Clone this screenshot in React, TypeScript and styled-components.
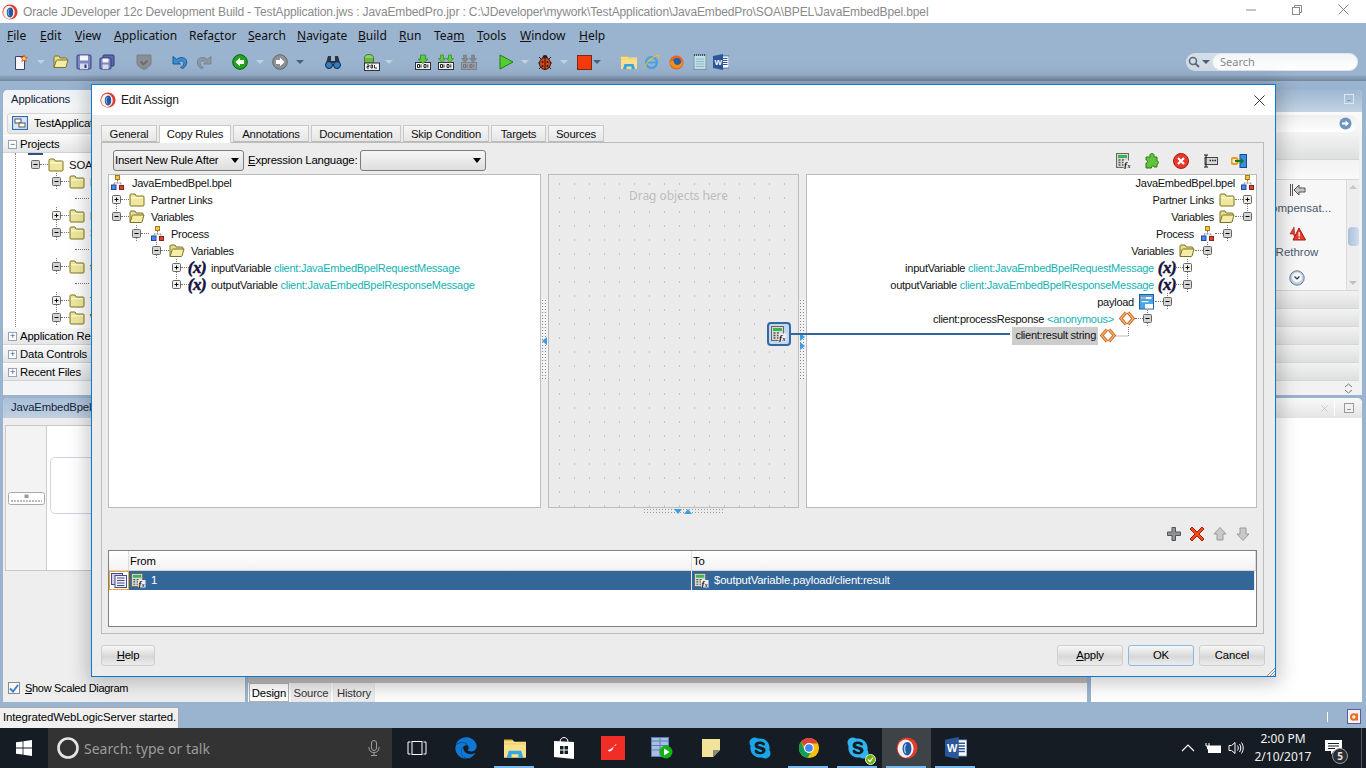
import React from "react";
import styled, { createGlobalStyle } from "styled-components";
import { FaEdge, FaSkype } from "react-icons/fa";

const UI = `"Liberation Sans", "Noto Sans", sans-serif`;
const NOTO = `"Noto Sans", "Liberation Sans", sans-serif`;
const BLUE = "#9ab3cf";

const Global = createGlobalStyle`
  html, body { margin: 0; padding: 0; width: 1366px; height: 768px; overflow: hidden; background: ${BLUE}; }
  * { box-sizing: border-box; }
  #root { width: 1366px; height: 768px; }
`;

const Page = styled.div`
  position: relative; width: 1366px; height: 768px; display: flex; flex-direction: column;
  overflow: hidden; background: ${BLUE}; font-family: ${UI}; font-size: 11.3px; letter-spacing: -0.15px; color: #000;
`;

/* ---------- window chrome ---------- */
const TitleBar = styled.div`
  height: 23px; flex: none; background: #fff; display: flex; align-items: center; padding-left: 2px; gap: 5px;
`;
const TitleText = styled.div`
  font-size: 12px; letter-spacing: -0.13px; color: #8a8a8a; white-space: nowrap; flex: 1;
`;
const WinButtons = styled.div`
  display: flex; align-items: center; height: 23px; padding-bottom: 4px;
`;
const WinBtn = styled.div<{ $w: number }>`
  width: ${p => p.$w}px; display: flex; justify-content: center;
`;
const MenuBar = styled.div`
  height: 24px; flex: none; background: ${BLUE}; display: flex; align-items: center; padding-left: 7px; font-size: 12px; letter-spacing: 0; font-family: ${NOTO};
`;
const MenuItem = styled.div<{ $w: number }>`
  width: ${p => p.$w}px; white-space: nowrap; color: #101010;
`;
const ToolBar = styled.div`
  height: 34px; flex: none; display: flex; align-items: center; padding: 0 8px 4px 14px;
  background: linear-gradient(#9ab3cf 0 28px, #8fa6c0 29px, #73879e 34px);
`;
const ToolSlot = styled.div<{ $ml: number; $w?: number }>`
  margin-left: ${p => p.$ml}px; width: ${p => p.$w ?? 16}px; height: 18px; display: flex; align-items: center; justify-content: center; flex: none;
`;
const DropArrow = styled.div<{ $dark?: boolean }>`
  width: 0; height: 0; border-left: 4px solid transparent; border-right: 4px solid transparent;
  border-top: 4px solid ${p => (p.$dark ? "#4e5e70" : "#c2d0e0")};
`;
const SearchBox = styled.div`
  margin-left: auto; width: 172px; height: 18px; display: flex; background: #d3dde8; border-radius: 9px; align-items: center;
`;
const SearchLens = styled.div`
  width: 26px; display: flex; align-items: center; justify-content: center; gap: 1px; flex: none;
`;
const SearchInput = styled.div`
  flex: 1; height: 18px; background: linear-gradient(#f2f4f7, #fff); border-radius: 9px; border: 1px solid #dfe5ec;
  color: #8a8a8a; font-size: 11px; letter-spacing: 0; line-height: 16px; padding-left: 7px; font-family: ${NOTO};
`;

/* ---------- workspace ---------- */
const Workspace = styled.div`
  flex: 1; min-height: 0; display: flex; padding: 9px 4px 3px 3px;
`;
const LeftCol = styled.div`
  width: 242px; flex: none; display: flex; flex-direction: column; gap: 3px;
`;
const AppPanel = styled.div`
  height: 305px; flex: none; background: #f4f5f6; border-radius: 5px 5px 0 0; display: flex; flex-direction: column;
`;
const AppHeader = styled.div`
  height: 18px; padding: 3px 0 0 8px; background: linear-gradient(#eef2f6, #f6f7f8); border-radius: 5px 5px 0 0; color: #12233a;
`;
const AppSelector = styled.div`
  height: 21px; margin: 5px 0 1px 4px; display: flex; align-items: center; gap: 6px; padding: 0 0 2px 4px;
  background: linear-gradient(#fafafa, #e6e6e6); border: 1px solid #d4d4d4; border-radius: 3px 0 0 3px;
`;
const AccordionRow = styled.div`
  height: 18px; flex: none; display: flex; align-items: center; gap: 3px; padding-left: 5px; white-space: nowrap;
  background: linear-gradient(#f9f9f9, #e4e6e8); border-top: 1px solid #fff; border-bottom: 1px solid #d0d3d6;
`;
const AccIcon = styled.span`
  width: 9px; height: 9px; border: 1px solid #9aa3ae; position: relative; flex: none; background: #fff;
  color: #295a8f; font-size: 9px; line-height: 7px; text-align: center;
`;
const NavTree = styled.div`
  flex: 1; min-height: 0; position: relative; background: #fff; padding-top: 3px; overflow: hidden;
  &::before { content: ""; position: absolute; left: 12px; top: 0; bottom: 0; border-left: 1px dotted #888; }
`;
const NavBit = styled.div`
  position: absolute; left: 25px; top: 0; width: 15px; height: 2px; background: #2e4f88;
`;
const PanelFiller = styled.div`
  height: 14px; flex: none; background: #f3f4f5;
`;
const DiagramPanel = styled.div`
  flex: 1; min-height: 0; display: flex; flex-direction: column; background: #eeeeee; border-radius: 5px 5px 0 0;
`;
const DiagramTab = styled.div`
  height: 20px; flex: none; padding: 3px 0 0 8px; background: linear-gradient(#a9bfd7, #c0d0e1); border-radius: 5px 5px 0 0; color: #12233a;
`;
const Thumb = styled.div`
  height: 146px; flex: none; margin: 7px 0 0 2px; display: flex; border: 1px solid #c8c8c8; background: #fff;
`;
const ThumbSide = styled.div`
  width: 41px; flex: none; background: #f3f3f3; border-right: 1px solid #ccc; display: flex; align-items: center; justify-content: center;
`;
const ThumbMain = styled.div`
  flex: 1; padding: 31px 0 0 3px;
`;
const ThumbBox = styled.div`
  width: 120px; height: 57px; border: 1px solid #d0d4ee; border-radius: 5px;
`;
const ShowScaled = styled.div`
  margin-top: auto; height: 24px; display: flex; align-items: center; gap: 5px; padding: 0 0 4px 5px; white-space: nowrap; font-size: 11px; letter-spacing: -0.3px;
`;
const CheckBox = styled.div`
  width: 12px; height: 12px; border: 1px solid #8a8a8a; background: #f6f6f6; display: flex; align-items: center; justify-content: center;
`;
const CenterCol = styled.div`
  flex: 1; min-width: 0; margin: 0 4px 0 3px; display: flex; flex-direction: column; background: #fff;
`;
const Canvas = styled.div` flex: 1; background: #fff; `;
const ScrollBand = styled.div` height: 10px; flex: none; background: #bdb9b9; `;
const EditorTabs = styled.div`
  height: 19px; flex: none; display: flex; gap: 2px; padding-left: 1px; align-items: stretch;
  background: linear-gradient(#f3f3f3, #fff);
`;
const EditorTab = styled.div<{ $w: number; $on?: boolean }>`
  width: ${p => p.$w}px; text-align: center; line-height: 18px;
  background: ${p => (p.$on ? "#fff" : "#ececec")}; color: ${p => (p.$on ? "#000" : "#333")};
  border: 1px solid ${p => (p.$on ? "#b0b0b0" : "#e6e6e6")};
`;
const RightCol = styled.div`
  width: 271px; flex: none; display: flex; flex-direction: column; gap: 3px;
`;
const PalettePanel = styled.div`
  height: 305px; flex: none; background: #f0f1f2; border-radius: 0 5px 0 0; display: flex; flex-direction: column;
`;
const PaletteHead = styled.div`
  height: 22px; flex: none; display: flex; justify-content: flex-end; align-items: center; padding: 0 8px 4px 0;
  background: linear-gradient(#9eb7d2, #c3d3e3); border-radius: 0 5px 0 0;
`;
const MinBtn = styled.div`
  width: 10px; height: 10px; border: 1px solid #dfe6ee; display: flex; align-items: flex-end; justify-content: center; padding-bottom: 2px;
  &::after { content: ""; width: 4px; height: 1px; background: #8a97a5; }
`;
const PaletteSearch = styled.div`
  height: 23px; flex: none; background: linear-gradient(#fbfbfb, #f2f3f3); display: flex; align-items: center; justify-content: flex-end; padding-right: 5px;
`;
const PaletteField = styled.div`
  width: 200px; height: 17px; background: linear-gradient(#efefef, #fff); border-radius: 0 8px 8px 0; display: flex; justify-content: flex-end; align-items: center; padding-right: 5px;
`;
const Band = styled.div<{ $h: number; $to?: string }>`
  height: ${p => p.$h}px; flex: none; background: linear-gradient(#f2f2f2, ${p => p.$to ?? "#dedfe0"}); border-bottom: 1px solid #d4d7da; margin-right: 3px;
`;
const PaletteList = styled.div`
  height: 111px; flex: none; display: flex; justify-content: flex-end; background: #f7f7f7; margin-right: 3px; border-bottom: 1px solid #d4d7da; overflow: hidden;
`;
const PaletteItems = styled.div`
  width: 90px; display: flex; flex-direction: column; align-items: center; margin: -5px 4px 0 0; white-space: nowrap; color: #4a5a6a; font-size: 11.5px; letter-spacing: 0;
`;
const PaletteIcon = styled.div`
  height: 19px; display: flex; align-items: center; justify-content: center; margin-top: 5px; flex: none;
`;
const PaletteLabel = styled.div` height: 20px; line-height: 19px; flex: none; `;
const ScrollTrack = styled.div`
  width: 13px; flex: none; position: relative; background: #eeeeee; border-left: 1px solid #dcdcdc; display: flex; flex-direction: column; align-items: center; justify-content: space-between; padding: 5px 0;
`;
const ScrollThumb = styled.div`
  position: absolute; left: 1px; top: 47px; width: 11px; height: 19px; border-radius: 4px; background: linear-gradient(90deg, #a9c0dc, #cfdcec);
`;
const ArrowUp = styled.div`
  width: 0; height: 0; border-left: 4px solid transparent; border-right: 4px solid transparent; border-bottom: 4px solid #c8c8c8;
`;
const ArrowDown = styled(ArrowUp)`
  border-bottom: 0; border-top: 4px solid #c0c0c0;
`;
const Chevrons = styled.div`
  height: 14px; flex: none; margin-right: 3px; display: flex; justify-content: flex-end; align-items: center; padding-right: 6px; background: #f2f2f2;
`;
const SidePanel = styled.div`
  flex: 1; min-height: 0; background: #fff; border-radius: 0 5px 0 0; display: flex; flex-direction: column;
`;
const SideHead = styled.div`
  height: 20px; flex: none; display: flex; align-items: center; justify-content: flex-end; gap: 6px; padding-right: 8px;
  background: linear-gradient(#f9f9f9, #e4e4e4); border-radius: 0 5px 0 0; color: #b9b9b9;
`;
const SideSep = styled.div` width: 1px; height: 16px; background: #fff; margin-right: 3px; `;
const SideMin = styled(MinBtn)` border-color: #9a9a9a; background: #f2f2f2; `;
const StatusBar = styled.div`
  height: 23px; flex: none; display: flex; align-items: flex-end; background: ${BLUE};
`;
const StatusMsg = styled.div`
  width: 179px; height: 21px; background: #f0f0f0; border: 1px solid #a9a9a9; border-left: 0; border-bottom: 0;
  padding: 3px 0 0 3px; font-size: 11.4px; letter-spacing: -0.1px; white-space: nowrap;
`;
const StatusRight = styled.div`
  margin-left: auto; display: flex; align-items: center; gap: 19px; height: 23px; padding-right: 5px;
`;
const StatusTick = styled.div` width: 1px; height: 10px; background: #fff; `;

/* ---------- taskbar ---------- */
const TaskBar = styled.div`
  height: 40px; flex: none; display: flex; align-items: stretch; background: #151c23; color: #fff; font-family: ${NOTO}; letter-spacing: 0;
`;
const StartBtn = styled.div`
  width: 48px; flex: none; display: flex; align-items: center; justify-content: center;
`;
const TaskSearch = styled.div`
  width: 344px; flex: none; background: #333333; display: flex; align-items: center; padding: 0 12px 0 9px; gap: 5px; color: #9c9c9c; font-size: 14px;
`;
const MicSlot = styled.div` margin-left: auto; display: flex; `;
const TaskItem = styled.div<{ $w?: number; $open?: boolean; $active?: boolean }>`
  position: relative; width: ${p => p.$w ?? 49}px; flex: none; display: flex; align-items: center; justify-content: center;
  background: ${p => (p.$active ? "#3e4347" : "transparent")};
  &::after {
    content: ""; display: ${p => (p.$open ? "block" : "none")}; position: absolute; left: 4px; right: 5px; bottom: 0; height: 2px; background: #76b9ed;
  }
`;
const SkypeBadge = styled.div`
  position: absolute; right: 6px; bottom: 3px; width: 11px; height: 11px; border-radius: 50%; background: #6fb100; border: 1px solid #e8e8e8;
  display: flex; align-items: center; justify-content: center;
`;
const Tray = styled.div`
  margin-left: auto; display: flex; align-items: center; height: 40px;
`;
const TraySlot = styled.div<{ $w: number }>`
  width: ${p => p.$w}px; display: flex; align-items: center; justify-content: center; flex: none;
`;
const Clock = styled.div`
  width: 62px; margin: 0 3px 0 5px; text-align: center; font-size: 12px; line-height: 18px; color: #f2f2f2; flex: none;
`;
const NotifBox = styled.div`
  position: relative; width: 44px; height: 40px; padding: 12px 0 0 8px; flex: none;
`;
const NotifBadge = styled.div`
  position: absolute; left: 15px; top: 20px; width: 16px; height: 16px; border-radius: 50%; border: 1px solid #999; background: #2a2f34;
  font-size: 10px; line-height: 14px; text-align: center; font-weight: 700; color: #e6e6e6;
`;
const DesktopPeek = styled.div` width: 5px; height: 40px; border-left: 1px solid #55595d; flex: none; `;

/* ---------- dialog ---------- */
const Dialog = styled.div`
  position: absolute; left: 91px; top: 84px; width: 1185px; height: 593px; border: 1px solid #0a7bd4; background: #ececec;
  box-shadow: 0 2px 18px 4px rgba(0, 0, 0, 0.22); display: flex; flex-direction: column; z-index: 5;
`;
const DialogTitle = styled.div`
  height: 30px; flex: none; background: #fff; display: flex; align-items: center; padding: 0 10px 0 8px; gap: 5px; font-size: 12px; color: #1a1a1a;
`;
const DialogClose = styled.div` margin-left: auto; display: flex; `;
const DialogBody = styled.div`
  flex: 1; min-height: 0; padding: 10px 11px 10px 9px; display: flex; flex-direction: column;
`;
const Tabs = styled.div`
  height: 17px; flex: none; display: flex; gap: 2px; position: relative; z-index: 1;
`;
const Tab = styled.div<{ $w: number; $on?: boolean }>`
  width: ${p => p.$w}px; height: ${p => (p.$on ? 18 : 17)}px; text-align: center; line-height: 16px; color: #111; letter-spacing: -0.2px;
  background: ${p => (p.$on ? "#fff" : "linear-gradient(#f6f6f6, #e6e6e6)")};
  border: 1px solid #c9c9c9; border-bottom: ${p => (p.$on ? "0" : "1px solid #bbb")};
`;
const TabPanel = styled.div`
  height: 492px; flex: none; border: 1px solid #bcbcbc; padding: 7px 6px; display: flex; flex-direction: column;
`;
const RuleBar = styled.div`
  height: 21px; flex: none; margin-bottom: 3px; display: flex; align-items: center; padding-left: 5px; font-size: 11.4px; letter-spacing: -0.2px;
`;
const SelectBox = styled.div<{ $w: number; $ml?: number }>`
  width: ${p => p.$w}px; margin-left: ${p => p.$ml ?? 0}px; height: 21px; border: 1px solid #7c7c7c; border-radius: 3px; flex: none;
  background: linear-gradient(#f6f6f6, #dedede); display: flex; align-items: center; padding: 0 4px 1px 1px; white-space: nowrap;
`;
const SelectArrow = styled.div`
  margin-left: auto; width: 0; height: 0; border-left: 4px solid transparent; border-right: 4px solid transparent; border-top: 5px solid #000;
`;
const RuleLabel = styled.div` margin-left: 4px; width: 107px; white-space: nowrap; flex: none; padding-bottom: 1px; `;
const RuleIcons = styled.div`
  margin-left: auto; display: flex; align-items: center; gap: 13px; padding-right: 10px;
`;
const Panes = styled.div`
  position: relative; height: 334px; flex: none; display: flex;
`;
const TreePane = styled.div<{ $w: number }>`
  width: ${p => p.$w}px; flex: none; background: #fff; border: 1px solid #bcbcbc; overflow: hidden; font-size: 11px; letter-spacing: -0.25px;
  & > :first-child { margin-top: -1px; }
`;
const DragPane = styled.div`
  width: 251px; flex: none; border: 1px solid #bcbcbc; text-align: center; padding: 12px 0 0 10px; color: #bdbdbd; font-family: ${NOTO}; font-size: 11.9px; letter-spacing: 0;
  background-color: #ebebeb;
  background-image: radial-gradient(circle, #c4c4c4 0.7px, transparent 1px);
  background-size: 15px 14px; background-position: 3px 2px;
`;
const Splitter = styled.div`
  width: 7px; flex: none; display: flex; flex-direction: column; align-items: center; justify-content: center; gap: 1px; position: relative;
  &::before {
    content: ""; position: absolute; left: 0; right: 0; top: 125px; height: 80px;
    background-image: radial-gradient(circle, #858585 0.8px, transparent 1px); background-size: 3px 3px; background-color: #f2f2f2;
  }
`;
const TriLeft = styled.div`
  position: relative; width: 0; height: 0; border-top: 4px solid transparent; border-bottom: 4px solid transparent; border-right: 5px solid #3f9be0;
`;
const TriRight = styled(TriLeft)`
  border-right: 0; border-left: 5px solid #3f9be0;
`;
const RowsHandle = styled.div`
  height: 7px; flex: none; display: flex; justify-content: center;
`;
const RowsHandleGrip = styled.div`
  width: 80px; height: 7px; display: flex; align-items: center; justify-content: center; gap: 2px;
  background-image: radial-gradient(circle, #9a9a9a 0.8px, transparent 1px); background-size: 3px 3px;
`;
const TriDown = styled.div`
  width: 0; height: 0; border-left: 4px solid transparent; border-right: 4px solid transparent; border-top: 5px solid #3f9be0;
`;
const TriUp = styled.div`
  width: 0; height: 0; border-left: 4px solid transparent; border-right: 4px solid transparent; border-bottom: 5px solid #3f9be0;
`;
const TableTools = styled.div`
  height: 18px; flex: none; margin: 10px 0 7px; display: flex; justify-content: flex-end; align-items: center; gap: 7px; padding-right: 6px;
`;
const RuleTable = styled.div`
  height: 77px; flex: none; border: 1px solid #808080; background: #fff; display: flex; flex-direction: column;
`;
const HeadRow = styled.div`
  height: 20px; flex: none; display: flex; background: linear-gradient(#fff, #f2f2f2); border-bottom: 1px solid #d4d4d4;
`;
const HeadCell = styled.div<{ $w?: number }>`
  ${p => (p.$w ? `width:${p.$w}px;` : "flex:1;")} padding: 4px 0 0 1px; border-right: 1px solid #dcdcdc;
`;
const DataRow = styled.div`
  height: 19px; flex: none; display: flex; color: #fff; margin-right: 1px;
`;
const MarkerCell = styled.div`
  width: 20px; flex: none; background: #fff; border: 1px solid #eea52d; display: flex; align-items: center; justify-content: center;
`;
const DataCell = styled.div<{ $w?: number }>`
  ${p => (p.$w ? `width:${p.$w}px;` : "flex:1;")} background: #336699; display: flex; align-items: center; gap: 5px; padding: 0 0 1px 2px; border-right: 1px solid #e8e8e8;
`;
const DialogFooter = styled.div`
  margin-top: 11px; height: 21px; flex: none; display: flex; justify-content: space-between; margin-right: -1px;
`;
const FooterGroup = styled.div` display: flex; gap: 5px; `;
const DlgButton = styled.div<{ $w: number; $primary?: boolean }>`
  width: ${p => p.$w}px; height: 21px; text-align: center; line-height: 18px; border-radius: 3px;
  background: linear-gradient(#f8f8f8, #d8d8d8 55%, #ececec);
  border: 1px solid ${p => (p.$primary ? "#8db8e0" : "#cfcfcf")};
`;
const Grip = styled.div`
  position: absolute; right: 0; bottom: 0; display: flex;
`;

/* ---------- tree ---------- */
const TreeRow = styled.div<{ $indent: number; $mirror?: boolean }>`
  height: 17px; display: flex; align-items: center; white-space: nowrap; color: #111;
  flex-direction: ${p => (p.$mirror ? "row-reverse" : "row")};
  ${p => (p.$mirror ? `padding-right:${p.$indent}px;` : `padding-left:${p.$indent}px;`)}
`;
const Connector = styled.div<{ $w?: number }>`
  width: ${p => p.$w ?? 8}px; flex: none; border-top: 1px dotted #777;
`;
const IconSlot = styled.div<{ $w?: number }>`
  width: ${p => p.$w ?? 16}px; height: 17px; flex: none; display: flex; align-items: center; justify-content: center;
`;
const Label = styled.span<{ $m?: number; $mirror?: boolean }>`
  ${p => (p.$mirror ? `margin-right:${p.$m ?? 5}px;` : `margin-left:${p.$m ?? 6}px;`)}
`;
const TypeText = styled.span` color: #14b3b3; `;
const HiLabel = styled.span`
  background: #cccccc; height: 18px; line-height: 17px; padding: 0 2px 0 3px; margin-right: 2px;
`;
const VarGlyph = styled.span`
  font-family: "Liberation Serif", serif; font-style: italic; font-weight: 700; font-size: 17px; color: #16123c; line-height: 17px; letter-spacing: -0.5px;
  -webkit-text-stroke: 0.5px #16123c;
`;
const NavRow = styled(TreeRow)` position: relative; &:first-of-type { margin-bottom: 1px; } `;
const NavLabel = styled.span` margin-left: 5px; `;
const NavDots = styled.div<{ $w: number }>` width: ${p => p.$w}px; border-top: 1px dotted #777; `;

/* ---------- map node ---------- */
const MapLink = styled.div`
  position: absolute; left: 681px; top: 159px; width: 221px; height: 2px; background: #336699; z-index: 2;
`;
const MapNode = styled.div`
  position: absolute; left: 659px; top: 148px; width: 24px; height: 24px; border-radius: 4px; border: 2px solid #2f6aa3;
  background: #c4d7ec; display: flex; align-items: center; justify-content: center; z-index: 3;
`;

/* ---------- icons ---------- */
type SP = { s?: number };
const OracleLogo = ({ s = 16 }: SP) => (
  <svg width={s} height={s} viewBox="0 0 16 16">
    <circle cx="8" cy="8" r="7.6" fill="#e5392b" />
    <ellipse cx="7" cy="8.4" rx="5.8" ry="6.6" fill="#f4f1ee" />
    <path d="M8.4 3.6c-2.4 0-3.6 2.2-3.6 4.8s1.2 5 3.4 5c1.8 0 3-2.2 3-5s-1-4.8-2.8-4.8z" fill="#1f5aa6" />
    <path d="M7.4 5.2c-1 .8-1.2 2-1.2 3.4 0 1.2.3 2.4 1 3" fill="none" stroke="#a9c6ea" strokeWidth="1" />
  </svg>
);
const NewIcon = () => (
  <svg width="16" height="17" viewBox="0 0 16 17">
    <path d="M1.5 2.5h9v13h-9z" fill="#f6f6fb" stroke="#3c3c78" />
    <path d="M10 1l1 2.4 2.5.1-1.9 1.6.7 2.4L10 6.2 7.800 7.500l.7-2.400-1.900-1.600 2.500-.1z" fill="#ffd83a" stroke="#e04b1a" strokeWidth=".8" />
  </svg>
);
const FolderClosed = () => (
  <svg width="16" height="14" viewBox="0 0 16 14">
    <path d="M1 3V2c0-.5.4-1 1-1h4l1.200 2H14c.6 0 1 .4 1 1v8c0 .6-.4 1-1 1H2c-.6 0-1-.4-1-1z" fill="#efe79a" stroke="#7d7322" />
    <path d="M2 4h12v1.500H2z" fill="#fbf7d0" />
  </svg>
);
const FolderOpen = () => (
  <svg width="16" height="14" viewBox="0 0 16 14">
    <path d="M1 12V2c0-.5.4-1 1-1h4l1.200 2H13c.6 0 1 .4 1 1v1" fill="#e8df8e" stroke="#7d7322" />
    <path d="M1 12.500l2.200-6.800c.1-.4.500-.7 1-.7H15l-2 7c-.1.300-.4.500-.8.500z" fill="#f4eca8" stroke="#7d7322" />
  </svg>
);
const SaveIcon = () => (
  <svg width="16" height="16" viewBox="0 0 16 16">
    <rect x="1" y="1" width="14" height="14" rx="1.500" fill="#7d88c0" stroke="#353a78" />
    <rect x="4" y="1.500" width="8" height="5" fill="#f4f4fa" />
    <rect x="4" y="9.500" width="8" height="5.500" fill="#d8dcf0" />
    <rect x="8.500" y="10.500" width="2" height="3.500" fill="#353a78" />
  </svg>
);
const SaveAllIcon = () => (
  <svg width="16" height="16" viewBox="0 0 16 16">
    <rect x="4" y="1" width="11" height="11" rx="1" fill="#5f6aa8" stroke="#353a78" />
    <rect x="1" y="4" width="11" height="11" rx="1" fill="#7d88c0" stroke="#353a78" />
    <rect x="3.500" y="4.500" width="6" height="4" fill="#f4f4fa" />
    <rect x="3.500" y="10.500" width="6" height="4.500" fill="#d8dcf0" />
  </svg>
);
const ShieldIcon = () => (
  <svg width="16" height="16" viewBox="0 0 16 16">
    <path d="M1 1h14v8c0 3-4 5-7 6.500C5 14 1 12 1 9z" fill="#8b8f94" stroke="#7b7f84" />
    <path d="M4.500 7.500l3 3 4-4" fill="none" stroke="#6a6e73" strokeWidth="1.800" />
  </svg>
);
const UndoIcon = () => (
  <svg width="16" height="16" viewBox="0 0 16 16">
    <path d="M4.800 5.500c2-2.500 8.500-3 9.800 1.500.7 3.300-1.500 6-3.800 7.500l-2.200-1c2-1 3.800-3 3.200-5-.6-2-4.300-2-5.500 0l2.200 1.500H1V2.500l2 1.500z"
      fill="#3d8fd6" stroke="#14508f" strokeWidth=".9" />
  </svg>
);
const RedoIcon = () => (
  <svg width="16" height="16" viewBox="0 0 16 16" style={{ transform: "scaleX(-1)" }}>
    <path d="M4.800 5.500c2-2.500 8.500-3 9.800 1.500.7 3.300-1.500 6-3.800 7.500l-2.200-1c2-1 3.800-3 3.200-5-.6-2-4.300-2-5.500 0l2.200 1.500H1V2.500l2 1.500z" fill="#8d99a6" stroke="#76828e" strokeWidth=".9" />
  </svg>
);
const NavCircle = ({ fill, edge, dir }: { fill: string; edge: string; dir: "l" | "r" }) => (
  <svg width="16" height="16" viewBox="0 0 16 16">
    <circle cx="8" cy="8" r="7.300" fill={fill} stroke={edge} />
    <path d={dir === "l" ? "M3.500 8L8 3.800V6h4v4H8v2.200z" : "M12.500 8L8 3.800V6H4v4h4v2.200z"} fill="#fff" />
  </svg>
);
const Binoculars = () => (
  <svg width="16" height="14" viewBox="0 0 16 14">
    <path d="M3 1h3v5h4V1h3l2 7H1z" fill="#2c3440" />
    <circle cx="4" cy="10" r="3.500" fill="#2f7fd0" stroke="#1b2532" />
    <circle cx="12" cy="10" r="3.500" fill="#2f7fd0" stroke="#1b2532" />
  </svg>
);
const SqlIcon = () => (
  <svg width="18" height="17" viewBox="0 0 18 17">
    <ellipse cx="7" cy="4" rx="4.500" ry="3.500" fill="#8ed06a" stroke="#3f7a2c" />
    <path d="M2.500 4v5h9V4" fill="#6ab848" stroke="#3f7a2c" />
    <rect x="2.500" y="9" width="15" height="7.500" fill="#f4f4f4" stroke="#333" />
    <path d="M5 11h2v1.500H5v1.500h2M9 11h1.500v3H9zM12.500 11v3H15" fill="none" stroke="#222" strokeWidth=".9" />
  </svg>
);
const DeployIcon = ({ gray, n = 1 }: { gray?: boolean; n?: number }) => (
  <svg width="16" height="16" viewBox="0 0 16 16">
    <rect x=".5" y="8.500" width="15" height="7" fill={gray ? "#9aa0a6" : "#f2f2f2"} stroke={gray ? "#80868c" : "#333"} />
    <path d="M2.500 10.500h2v3h-2zM9 10.500h2v3H9zM6 10.500v3M12.800 10.500v3" fill="none" stroke={gray ? "#70767c" : "#222"} />
    {n === 1 ? (
      <path d="M5.500 1h5v4H13l-5 4.500L3 5h2.500z" fill={gray ? "#848a90" : "#5ccc3c"} stroke={gray ? "#70767c" : "#2c7c1c"} strokeWidth=".7" />
    ) : (
      <g fill={gray ? "#848a90" : "#5ccc3c"} stroke={gray ? "#70767c" : "#2c7c1c"} strokeWidth=".6">
        <path d="M2.500 1h3v3.500h2L4 8.500 .5 4.500h2z" />
        <path d="M10.500 1h3v3.500h2L12 8.500 8.500 4.500h2z" />
      </g>
    )}
  </svg>
);
const RunIcon = () => (
  <svg width="15" height="16" viewBox="0 0 15 16">
    <path d="M1 1l13 7-13 7z" fill="#53d030" stroke="#247a12" />
  </svg>
);
const BugIcon = () => (
  <svg width="16" height="16" viewBox="0 0 16 16">
    <path d="M2 3l3 3M14 3l-3 3M1 9h3M15 9h-3M2 15l3-3M14 15l-3-3" stroke="#222" />
    <circle cx="8" cy="3.500" r="2.500" fill="#222" />
    <ellipse cx="8" cy="9.500" rx="5.500" ry="6" fill="#d4491a" stroke="#3a1505" />
    <path d="M8 4v11.500" stroke="#3a1505" />
    <circle cx="5.500" cy="8" r="1" fill="#222" /><circle cx="10.500" cy="8" r="1" fill="#222" />
    <circle cx="5.500" cy="12" r="1" fill="#222" /><circle cx="10.500" cy="12" r="1" fill="#222" />
  </svg>
);
const StopIcon = () => (
  <svg width="15" height="15" viewBox="0 0 15 15"><rect x=".5" y=".5" width="14" height="14" fill="#f53a0c" stroke="#7e2a10" /></svg>
);
const ExplorerIcon = ({ s = 16 }: SP) => (
  <svg width={s} height={s} viewBox="0 0 16 16">
    <path d="M0 2h6l1.500 1.500H16V15H0z" fill="#f8e18e" />
    <path d="M0 2h6l1 1H0z" fill="#e8b93a" />
    <path d="M2 15l1.500-5h9L14 15h-3.500v-2.500h-5V15z" fill="#35a6e4" />
    <path d="M0 5h16" stroke="#f3cf62" />
  </svg>
);
const IEIcon = () => (
  <svg width="17" height="16" viewBox="0 0 17 16">
    <circle cx="8" cy="8.500" r="5.800" fill="none" stroke="#4aa3de" strokeWidth="2.400" />
    <path d="M3 8.500h10.500" stroke="#4aa3de" strokeWidth="2" />
    <path d="M1 14C0 11 9 2 14 1c2-.3 2.500 1 1.500 3" fill="none" stroke="#f0c020" strokeWidth="1.100" />
  </svg>
);
const FirefoxIcon = ({ s = 15 }: SP) => (
  <svg width={s} height={s} viewBox="0 0 16 16">
    <circle cx="8" cy="8" r="7.500" fill="#e8661c" />
    <circle cx="8.500" cy="7.500" r="4.300" fill="#2a5fa8" />
    <path d="M1 8c1 5 7 8 11 5 2.500-2 3-5 2-8-.5 3-2 5-4 5.500C7 11 5 9 5 6 3 6 2 6.500 1 8z" fill="#f0921e" />
  </svg>
);
const NotepadIcon = () => (
  <svg width="14" height="16" viewBox="0 0 14 16">
    <rect x="1" y="1" width="12" height="14.500" fill="#bfe0ec" stroke="#7a9aa6" />
    <path d="M1 1h12" stroke="#333" strokeDasharray="1 1" strokeWidth="1.500" />
    <path d="M3 5h8M3 7.500h8M3 10h8M3 12.500h8" stroke="#8fb6c4" />
  </svg>
);
const WordGlyph = styled.text`
  font-family: "Liberation Sans", sans-serif; font-weight: 700; font-size: 8px; fill: #fff;
`;
const WordIcon = ({ s = 16 }: SP) => (
  <svg width={s} height={s} viewBox="0 0 16 16">
    <rect x="6" y="2" width="10" height="12" fill="#fff" stroke="#2b579a" strokeWidth=".7" />
    <path d="M9.500 4.500h5M9.500 6.500h5M9.500 8.500h5M9.500 10.500h5" stroke="#2b579a" />
    <path d="M0 2l10-2v16L0 14z" fill="#2b579a" />
    <WordGlyph x="1.500" y="11">W</WordGlyph>
  </svg>
);
const LensIcon = () => (
  <svg width="13" height="13" viewBox="0 0 13 13">
    <circle cx="5" cy="5" r="3.500" fill="none" stroke="#5c6b7a" strokeWidth="1.600" />
    <path d="M7.500 7.500L11 11" stroke="#5c6b7a" strokeWidth="2" />
  </svg>
);
const BpelIcon = () => (
  <svg width="13" height="15" viewBox="0 0 13 15">
    <path d="M6.500 5v3M3 11V8h7v3" fill="none" stroke="#777" strokeDasharray="1 .5" />
    <rect x="4.500" y=".5" width="4" height="4" fill="#f2c44e" stroke="#b07a10" />
    <rect x=".5" y="10" width="4.500" height="4.500" fill="#4f86e8" stroke="#23499a" />
    <rect x="8.500" y="10.500" width="4" height="4" fill="#d8453a" stroke="#8f1f18" />
  </svg>
);
const Exp = ({ open, up, down }: { open?: boolean; up?: boolean; down?: boolean }) => (
  <svg width="9" height="17" viewBox="0 0 9 17" style={{ flex: "none" }}>
    {up && <path d="M4.500 0v4" stroke="#777" strokeDasharray="1 1" />}
    {down && <path d="M4.500 13v4" stroke="#777" strokeDasharray="1 1" />}
    <rect x=".5" y="4.500" width="8" height="8" rx="1" fill={open ? "#d4d4d0" : "#efefea"} stroke="#666" />
    <path d="M2.500 8.500h4" stroke="#000" />
    {!open && <path d="M4.500 6.500v4" stroke="#000" />}
  </svg>
);
const MathGlyph = styled.text` font-family: "Liberation Serif", serif; font-style: italic; font-weight: 700; font-size: 9px; fill: #111; `;
const MathSmall = styled.text` font-family: "Liberation Serif", serif; font-style: italic; font-weight: 700; font-size: 6px; fill: #111; `;
const CalcIcon = ({ s = 16 }: SP) => (
  <svg width={s} height={s} viewBox="0 0 16 16">
    <rect x=".5" y=".5" width="12" height="14" fill="#d8d8d8" stroke="#666" />
    <rect x="2" y="2" width="9" height="3" fill="#3cb54a" />
    <path d="M2.500 7h2M6 7h2M2.500 9.500h2M6 9.500h2M2.500 12h2M6 12h2" stroke="#555" strokeWidth="1.300" />
    <rect x="7.500" y="7.500" width="8" height="8" fill="#eee" />
    <MathGlyph x="8" y="14.500">f</MathGlyph>
    <MathSmall x="11.500" y="15">x</MathSmall>
  </svg>
);
const PuzzleIcon = () => (
  <svg width="15" height="16" viewBox="0 0 15 16">
    <path d="M5 4V2c0-2 4-2 4 0v2h3v4c2 0 2 3 0 3v3h-3c0-1.500-2.500-1.500-2.500 0V15H1V10c2 0 2-3 0-3V4z" fill="#5fc43a" stroke="#2f7a1c" />
  </svg>
);
const ErrCircle = () => (
  <svg width="16" height="16" viewBox="0 0 16 16">
    <circle cx="8" cy="8" r="7.500" fill="#e9392b" stroke="#a81c14" />
    <path d="M5 5l6 6M11 5l-6 6" stroke="#fff" strokeWidth="2.200" />
  </svg>
);
const TextFieldIcon = () => (
  <svg width="16" height="14" viewBox="0 0 16 14">
    <rect x="3" y="3.500" width="12.500" height="7" fill="#d8d8d8" stroke="#444" />
    <path d="M2 1h4M2 13h4M4 1v12" stroke="#111" />
    <path d="M7.500 6.500h1.500M10 6.500h1.500M12.500 6.500H14" stroke="#222" strokeWidth="1.500" />
  </svg>
);
const ImportIcon = () => (
  <svg width="16" height="14" viewBox="0 0 16 14">
    <rect x="9" y=".5" width="6.500" height="13" fill="#3b8fe0" stroke="#174a90" />
    <rect x=".5" y="4" width="6" height="6" rx="2" fill="none" stroke="#ec9b18" strokeWidth="2" />
    <path d="M4 6h6V4l3 3-3 3V8H4z" fill="#0f7a1e" />
  </svg>
);
const PayloadIcon = () => (
  <svg width="16" height="16" viewBox="0 0 16 16">
    <rect x=".5" y=".5" width="14" height="14.500" fill="#4aa5e8" stroke="#1e5c9c" />
    <rect x="2.500" y="3" width="10" height="2" fill="#fff" />
    <rect x="3" y="3.500" width="4" height="1" fill="#d8322a" />
    <rect x="2.500" y="7" width="7" height="1.200" fill="#dff" />
    <rect x="6" y="10" width="8" height="4.500" fill="#fff" />
  </svg>
);
const ElementIcon = () => (
  <svg width="16" height="15" viewBox="0 0 16 15">
    <path d="M7 1.500L1.800 7.500 7 13.500M9 1.500L14.200 7.500 9 13.500" fill="none" stroke="#c85f18" strokeWidth="3.200" />
    <path d="M7 1.500L1.800 7.500 7 13.500M9 1.500L14.200 7.500 9 13.500" fill="none" stroke="#f6b070" strokeWidth="1.400" />
  </svg>
);
const Elbow = () => (
  <svg width="13" height="17" viewBox="0 0 13 17" style={{ flex: "none" }}>
    <path d="M12.500 0v9H0" fill="none" stroke="#777" strokeDasharray="1 1" />
  </svg>
);
const PlusIcon = () => (
  <svg width="16" height="16" viewBox="0 0 16 16">
    <path d="M6 1.500h3.500V6H14.500v3.500H9.500V14.500H6V9.500H1.500V6H6z" fill="#8f9499" stroke="#555" />
  </svg>
);
const RedX = () => (
  <svg width="16" height="16" viewBox="0 0 16 16">
    <path d="M3 1l5 5 5-5 2 2-5 5 5 5-2 2-5-5-5 5-2-2 5-5-5-5z" fill="#f04a1c" stroke="#b02008" />
  </svg>
);
const GrayArrow = ({ down }: { down?: boolean }) => (
  <svg width="16" height="16" viewBox="0 0 16 16" style={down ? { transform: "scaleY(-1)" } : undefined}>
    <path d="M8 1.500L14 8h-3v6H5V8H2z" fill="#c9c9c9" stroke="#9a9a9a" />
  </svg>
);
const DocsIcon = () => (
  <svg width="16" height="15" viewBox="0 0 16 15">
    <rect x=".5" y=".5" width="11" height="11" fill="#cfd3ea" stroke="#4a4a88" />
    <rect x="4" y="2.500" width="11.500" height="12" fill="#eef0fa" stroke="#4a4a88" />
    <path d="M6 5h7.500M6 7.500h7.500M6 10h7.500M6 12.500h7.500" stroke="#4a4a88" />
  </svg>
);
const AppIcon = () => (
  <svg width="16" height="14" viewBox="0 0 16 14">
    <rect x=".5" y=".5" width="15" height="13" fill="#d9e8f8" stroke="#2f6db0" strokeWidth="1.200" />
    <rect x="3" y="3" width="6" height="4" fill="#fff" stroke="#555" />
    <rect x="7" y="7" width="6" height="4" fill="#fff" stroke="#555" />
  </svg>
);
const CompensateIcon = () => (
  <svg width="17" height="14" viewBox="0 0 17 14">
    <path d="M1.500 1v12M3.500 1v12" stroke="#555" />
    <path d="M5 7l5-5v3h6v4h-6v3z" fill="#c8c8c8" stroke="#555" />
  </svg>
);
const RethrowIcon = () => (
  <svg width="17" height="15" viewBox="0 0 17 15">
    <path d="M5 1L1 8h3l2 3z" fill="#e53b2c" stroke="#a31d14" strokeWidth=".6" />
    <path d="M10 2l6.500 12H4z" fill="#ea3a2c" stroke="#a31d14" />
    <path d="M9.500 6h1.300v4.500H9.500zM9.500 11.500h1.300V13H9.500z" fill="#fff" />
  </svg>
);
const ClockIcon = () => (
  <svg width="16" height="16" viewBox="0 0 16 16">
    <circle cx="8" cy="8" r="7.200" fill="#b8cfe8" stroke="#707f90" />
    <circle cx="8" cy="7.500" r="5" fill="#f4f7fb" />
    <path d="M5.500 6.500L8 9l2.500-2.500" fill="none" stroke="#333" strokeWidth="1.100" />
  </svg>
);
const ArrowCircle = () => (
  <svg width="13" height="13" viewBox="0 0 13 13">
    <circle cx="6.500" cy="6.500" r="6" fill="#6f94bf" />
    <path d="M3 5.500h3.500V3.500L10 6.500l-3.500 3v-2H3z" fill="#fff" />
  </svg>
);
const Chev = () => (
  <svg width="9" height="11" viewBox="0 0 9 11"><path d="M1 4l3.500-3L8 4M1 7l3.500 3L8 7" fill="none" stroke="#777" /></svg>
);
const AIcon = () => (
  <svg width="14" height="15" viewBox="0 0 14 15">
    <rect x=".5" y=".5" width="13" height="14" fill="#f5f2fa" stroke="#5c5a9c" />
    <circle cx="6.800" cy="8" r="2.800" fill="none" stroke="#ef6b1a" strokeWidth="2" />
    <path d="M10 4.500v7" stroke="#ef6b1a" strokeWidth="2" />
  </svg>
);
const WinLogo = ({ s = 16 }: SP) => (
  <svg width={s} height={s} viewBox="0 0 16 16">
    <path d="M0 2.300L6.600 1.400V7.600H0zM7.400 1.300L16 0V7.600H7.400zM0 8.400H6.600V14.600L0 13.700zM7.400 8.400H16V16L7.400 14.700z" fill="#fff" />
  </svg>
);
const CortanaRing = () => (
  <svg width="22" height="22" viewBox="0 0 22 22"><circle cx="11" cy="11" r="9.500" fill="none" stroke="#e6e6e6" strokeWidth="2.600" /></svg>
);
const MicIcon = () => (
  <svg width="12" height="16" viewBox="0 0 12 16" fill="none" stroke="#9c9c9c">
    <rect x="3.500" y=".5" width="5" height="10" rx="2.500" />
    <path d="M1 7v1c0 3 2 4.500 5 4.500s5-1.500 5-4.500V7M6 12.500v3M3 15.500h6" />
  </svg>
);
const TaskViewIcon = () => (
  <svg width="20" height="14" viewBox="0 0 20 14" fill="none" stroke="#fff">
    <path d="M3.500 1H1v12h2.500M16.500 1H19v12h-2.500" />
    <rect x="5" y=".5" width="10" height="13" fill="#151c23" />
  </svg>
);
const StoreIcon = () => (
  <svg width="22" height="24" viewBox="0 0 22 24">
    <path d="M7 6c0-6 8-6 8 0" fill="none" stroke="#fff" />
    <path d="M1 5l20 1v17L1 21z" fill="#fff" />
    <path d="M7 10h3.500v3.500H7zM11.500 10H15v3.500h-3.500zM7 14.500h3.500V18H7zM11.500 14.500H15V18h-3.500z" fill="#151c23" />
  </svg>
);
const RedTile = () => (
  <svg width="24" height="24" viewBox="0 0 24 24">
    <rect width="24" height="24" fill="#f22d26" />
    <path d="M7 14c2.500-.5 4-2 6-3.500-1 1.600-1 3-3 4.500-1.500.8-3 .4-3-1zM13 9.500l2.500-1.500-.8 1.800z" fill="#fff" />
  </svg>
);
const MediaTile = () => (
  <svg width="22" height="22" viewBox="0 0 22 22">
    <rect x=".5" y=".5" width="17" height="19" fill="#a8bee0" stroke="#5a7fb8" />
    <path d="M.5 4h17M.5 8.500h17M.5 13h17M9 .5v19" stroke="#5a7fb8" />
    <circle cx="15" cy="15" r="6.500" fill="#12b312" />
    <path d="M13 11.500v7l5.500-3.500z" fill="#fff" />
  </svg>
);
const StickyIcon = () => (
  <svg width="18" height="18" viewBox="0 0 18 18">
    <path d="M0 0h18v11l-7 7H0z" fill="#f2e39a" />
    <path d="M11 18v-7h7z" fill="#8a8a78" />
  </svg>
);
const ChromeIcon = () => (
  <svg width="22" height="22" viewBox="0 0 24 24">
    <circle cx="12" cy="12" r="11" fill="#f4c20d" />
    <path d="M12 1a11 11 0 0 1 9.800 6H12a5 5 0 0 0-4.800 3.500L3.300 5.300A11 11 0 0 1 12 1z" fill="#db4437" />
    <path d="M3.300 5.300A11 11 0 0 0 10.500 22.900l3.700-6.200a5 5 0 0 1-7-2.700z" fill="#0f9d58" />
    <circle cx="12" cy="12" r="5.400" fill="#fff" />
    <circle cx="12" cy="12" r="4.200" fill="#4285f4" />
  </svg>
);
const TickIcon = () => (
  <svg width="7" height="7" viewBox="0 0 7 7"><path d="M1 3.500l2 2 3-4" fill="none" stroke="#fff" strokeWidth="1.200" /></svg>
);
const TrayUp = () => (
  <svg width="14" height="8" viewBox="0 0 14 8"><path d="M1 7l6-6 6 6" fill="none" stroke="#fff" strokeWidth="1.200" /></svg>
);
const BatteryIcon = () => (
  <svg width="17" height="12" viewBox="0 0 17 12">
    <rect x="3" y="3.500" width="13" height="7.500" fill="#fff" />
    <path d="M1 1v3h3V1M2.500 4v3h2" fill="none" stroke="#fff" />
  </svg>
);
const SpeakerIcon = () => (
  <svg width="16" height="14" viewBox="0 0 16 14" fill="none" stroke="#fff">
    <path d="M1 4.500h2.500L7 1.500v11L3.500 9.500H1z" />
    <path d="M9.500 4.500c1 1.500 1 3.500 0 5M11.500 3c1.700 2.500 1.700 5.500 0 8M13.500 1.500c2.300 3.500 2.300 7.500 0 11" />
  </svg>
);
const NotifIcon = () => (
  <svg width="17" height="15" viewBox="0 0 17 15">
    <path d="M0 0h17v11H9l-3 3.500V11H0z" fill="#fff" />
    <path d="M3 3.500h11M3 6h11M3 8.500h7" stroke="#151c23" />
  </svg>
);
const CloseX = ({ s = 12, c = "#222" }: { s?: number; c?: string }) => (
  <svg width={s} height={s} viewBox="0 0 12 12"><path d="M.5.500l11 11M11.500.500l-11 11" stroke={c} /></svg>
);
const RestoreIcon = () => (
  <svg width="10" height="10" viewBox="0 0 10 10" fill="none" stroke="#8a8a8a">
    <path d="M2.500 2.500V.5h7v7H7.500" /><rect x=".5" y="2.500" width="7" height="7" fill="#fff" />
  </svg>
);
const MinLine = () => <svg width="10" height="2" viewBox="0 0 10 2"><path d="M0 1h10" stroke="#8a8a8a" /></svg>;
const CheckMark = () => (
  <svg width="10" height="9" viewBox="0 0 10 9"><path d="M1 4.500l3 3 5-6.500" fill="none" stroke="#3f7fd0" strokeWidth="2" /></svg>
);
const GripIcon = () => (
  <svg width="8" height="8" viewBox="0 0 8 8"><path d="M8 0L0 8M8 3L3 8M8 6L6 8" stroke="#9a9a9a" /></svg>
);
const ThumbSvg = () => (
  <svg width="37" height="13" viewBox="0 0 37 13">
    <rect x=".5" y=".5" width="36" height="12" rx="2" fill="#fff" stroke="#aaa" />
    <path d="M16.500 2.500h4v3.500h-4z" fill="#999" />
    <path d="M3 9h31" stroke="#777" strokeDasharray="2 1" />
  </svg>
);

/* ---------- data ---------- */
const menu: [string, string, string, number][] = [
  ["", "F", "ile", 33], ["", "E", "dit", 35], ["", "V", "iew", 39], ["", "A", "pplication", 75],
  ["Refa", "c", "tor", 59], ["", "S", "earch", 49], ["", "N", "avigate", 61], ["", "B", "uild", 41],
  ["", "R", "un", 35], ["Tea", "m", "", 43], ["", "T", "ools", 43], ["", "W", "indow", 59], ["", "H", "elp", 40],
];
const tabs: [string, number, boolean?][] = [
  ["General", 56], ["Copy Rules", 72, true], ["Annotations", 76], ["Documentation", 90],
  ["Skip Condition", 86], ["Targets", 55], ["Sources", 56],
];
const tools: [React.ReactNode, number, number?][] = [
  [<NewIcon />, 0], [<DropArrow />, 7, 8], [<FolderOpen />, 8], [<SaveIcon />, 7], [<SaveAllIcon />, 7],
  [<ShieldIcon />, 21], [<UndoIcon />, 20], [<RedoIcon />, 8],
  [<NavCircle fill="#21a51f" edge="#0b5f10" dir="l" />, 20], [<DropArrow />, 8, 8],
  [<NavCircle fill="#8e9296" edge="#666" dir="r" />, 8], [<DropArrow $dark />, 8, 8],
  [<Binoculars />, 21], [<SqlIcon />, 21, 18], [<DropArrow />, 5, 8],
  [<DeployIcon />, 22], [<DeployIcon n={2} />, 7], [<DeployIcon gray n={2} />, 7],
  [<RunIcon />, 21], [<DropArrow />, 7, 8], [<BugIcon />, 8], [<DropArrow />, 7, 8],
  [<StopIcon />, 8], [<DropArrow $dark />, 1, 8], [<ExplorerIcon />, 20], [<IEIcon />, 7], [<FirefoxIcon />, 8], [<NotepadIcon />, 8], [<WordIcon />, 5],
];

type Node = {
  lvl: number; open?: boolean; icon: React.ReactNode; name: string; type?: string; up?: boolean; down?: boolean; w?: number;
};
const leftNodes: Node[] = [
  { lvl: 0, icon: <FolderClosed />, name: "Partner Links", down: true },
  { lvl: 0, open: true, icon: <FolderOpen />, name: "Variables", up: true },
  { lvl: 1, open: true, icon: <BpelIcon />, name: "Process", up: true, down: true },
  { lvl: 2, open: true, icon: <FolderOpen />, name: "Variables", up: true, down: true },
  { lvl: 3, icon: <VarGlyph>(x)</VarGlyph>, name: "inputVariable ", type: "client:JavaEmbedBpelRequestMessage", up: true, down: true },
  { lvl: 3, icon: <VarGlyph>(x)</VarGlyph>, name: "outputVariable ", type: "client:JavaEmbedBpelResponseMessage", up: true },
];
const rightNodes: Node[] = [
  ...leftNodes.slice(0, 5),
  { lvl: 3, open: true, icon: <VarGlyph>(x)</VarGlyph>, name: "outputVariable ", type: "client:JavaEmbedBpelResponseMessage", up: true, down: true },
  { lvl: 4, open: true, icon: <PayloadIcon />, name: "payload", up: true, down: true },
  { lvl: 5, open: true, icon: <ElementIcon />, name: "client:processResponse ", type: "<anonymous>", up: true, down: true },
];
const navRows: { x: number; kind: "open" | "closed" | "dots"; bold?: string }[] = [
  { x: 52, kind: "open", bold: "B" }, { x: 72, kind: "dots" }, { x: 52, kind: "closed", bold: "B" },
  { x: 52, kind: "open", bold: "S" }, { x: 72, kind: "dots" }, { x: 52, kind: "open", bold: "t" },
  { x: 72, kind: "dots" }, { x: 52, kind: "closed", bold: "T" }, { x: 52, kind: "open", bold: "W" },
];
type Task = { icon: React.ReactNode; open?: boolean; active?: boolean; badge?: boolean };
const tasks: Task[] = [
  { icon: <FaEdge size={22} color="#0f78d4" /> },
  { icon: <ExplorerIcon s={22} />, open: true },
  { icon: <StoreIcon /> },
  { icon: <RedTile /> },
  { icon: <MediaTile /> },
  { icon: <StickyIcon /> },
  { icon: <FaSkype size={24} color="#1aa5e6" /> },
  { icon: <ChromeIcon />, open: true },
  { icon: <FaSkype size={24} color="#2fb4ee" />, open: true, badge: true },
  { icon: <OracleLogo s={22} />, open: true, active: true },
  { icon: <WordIcon s={22} />, open: true },
];

const App = () => (
  <Page>
    <Global />
    <TitleBar>
      <OracleLogo />
      <TitleText>Oracle JDeveloper 12c Development Build - TestApplication.jws : JavaEmbedPro.jpr : C:\JDeveloper\mywork\TestApplication\JavaEmbedPro\SOA\BPEL\JavaEmbedBpel.bpel</TitleText>
      <WinButtons>
        <WinBtn $w={46}><MinLine /></WinBtn>
        <WinBtn $w={46}><RestoreIcon /></WinBtn>
        <WinBtn $w={46}><CloseX s={11} c="#777" /></WinBtn>
      </WinButtons>
    </TitleBar>
    <MenuBar>
      {menu.map(([a, u, b, w]) => (
        <MenuItem key={a + u + b} $w={w}>{a}<u>{u}</u>{b}</MenuItem>
      ))}
    </MenuBar>
    <ToolBar>
      {tools.map(([node, ml, w], i) => (
        <ToolSlot key={i} $ml={ml} $w={w}>{node}</ToolSlot>
      ))}
      <SearchBox>
        <SearchLens><LensIcon /><DropArrow $dark /></SearchLens>
        <SearchInput>Search</SearchInput>
      </SearchBox>
    </ToolBar>

    <Workspace>
      <LeftCol>
        <AppPanel>
          <AppHeader>Applications</AppHeader>
          <AppSelector><AppIcon />TestApplication</AppSelector>
          <AccordionRow><AccIcon>−</AccIcon>Projects</AccordionRow>
          <NavTree>
            <NavBit />
            <NavRow $indent={28}>
              <Exp open /><Connector /><IconSlot><FolderClosed /></IconSlot><NavLabel>SOA</NavLabel>
            </NavRow>
            {navRows.map((r, i) =>
              r.kind === "dots" ? (
                <NavRow key={i} $indent={r.x}><NavDots $w={14} /></NavRow>
              ) : (
                <NavRow key={i} $indent={r.x - 3}>
                  <Exp open={r.kind === "open"} up down /><Connector /><IconSlot><FolderClosed /></IconSlot><NavLabel>{r.bold}</NavLabel>
                </NavRow>
              )
            )}
          </NavTree>
          <AccordionRow><AccIcon>+</AccIcon>Application Resources</AccordionRow>
          <AccordionRow><AccIcon>+</AccIcon>Data Controls</AccordionRow>
          <AccordionRow><AccIcon>+</AccIcon>Recent Files</AccordionRow>
          <PanelFiller />
        </AppPanel>
        <DiagramPanel>
          <DiagramTab>JavaEmbedBpel.bpel</DiagramTab>
          <Thumb>
            <ThumbSide><ThumbSvg /></ThumbSide>
            <ThumbMain><ThumbBox /></ThumbMain>
          </Thumb>
          <ShowScaled>
            <CheckBox><CheckMark /></CheckBox>
            <span><u>S</u>how Scaled Diagram</span>
          </ShowScaled>
        </DiagramPanel>
      </LeftCol>
      <CenterCol>
        <Canvas />
        <ScrollBand />
        <EditorTabs>
          <EditorTab $w={40} $on>Design</EditorTab>
          <EditorTab $w={40}>Source</EditorTab>
          <EditorTab $w={42}>History</EditorTab>
        </EditorTabs>
      </CenterCol>
      <RightCol>
        <PalettePanel>
          <PaletteHead><MinBtn /></PaletteHead>
          <PaletteSearch><PaletteField><ArrowCircle /></PaletteField></PaletteSearch>
          <Band $h={25} />
          <Band $h={20} $to="#fafafa" />
          <PaletteList>
            <PaletteItems>
              <PaletteIcon><CompensateIcon /></PaletteIcon>
              <PaletteLabel>Compensat...</PaletteLabel>
              <PaletteIcon><RethrowIcon /></PaletteIcon>
              <PaletteLabel>Rethrow</PaletteLabel>
              <PaletteIcon><ClockIcon /></PaletteIcon>
            </PaletteItems>
            <ScrollTrack>
              <ArrowUp />
              <ScrollThumb />
              <ArrowDown />
            </ScrollTrack>
          </PaletteList>
          <Band $h={18} />
          <Band $h={18} />
          <Band $h={18} />
          <Band $h={18} />
          <Band $h={18} />
          <Chevrons><Chev /></Chevrons>
        </PalettePanel>
        <SidePanel>
          <SideHead>
            <CloseX s={7} c="#b5b5b5" />
            <SideSep />
            <SideMin />
          </SideHead>
        </SidePanel>
      </RightCol>
    </Workspace>

    <StatusBar>
      <StatusMsg>IntegratedWebLogicServer started.</StatusMsg>
      <StatusRight><StatusTick /><AIcon /></StatusRight>
    </StatusBar>

    <TaskBar>
      <StartBtn><WinLogo /></StartBtn>
      <TaskSearch>
        <CortanaRing />
        <span>Search: type or talk</span>
        <MicSlot><MicIcon /></MicSlot>
      </TaskSearch>
      <TaskItem $w={49}><TaskViewIcon /></TaskItem>
      {tasks.map((t, i) => (
        <TaskItem key={i} $open={t.open} $active={t.active}>
          {t.icon}
          {t.badge && <SkypeBadge><TickIcon /></SkypeBadge>}
        </TaskItem>
      ))}
      <Tray>
        <TraySlot $w={26}><TrayUp /></TraySlot>
        <TraySlot $w={24}><BatteryIcon /></TraySlot>
        <TraySlot $w={22}><SpeakerIcon /></TraySlot>
        <Clock>2:00 PM<br />2/10/2017</Clock>
        <NotifBox><NotifIcon /><NotifBadge>5</NotifBadge></NotifBox>
        <DesktopPeek />
      </Tray>
    </TaskBar>

    <Dialog>
      <DialogTitle>
        <OracleLogo />
        Edit Assign
        <DialogClose><CloseX s={11} /></DialogClose>
      </DialogTitle>
      <DialogBody>
        <Tabs>
          {tabs.map(([t, w, on]) => <Tab key={t} $w={w} $on={on}>{t}</Tab>)}
        </Tabs>
        <TabPanel>
          <RuleBar>
            <SelectBox $w={131}>Insert New Rule After<SelectArrow /></SelectBox>
            <RuleLabel><u>E</u>xpression Language:</RuleLabel>
            <SelectBox $w={126} $ml={5}><SelectArrow /></SelectBox>
            <RuleIcons>
              <CalcIcon />
              <PuzzleIcon />
              <ErrCircle />
              <TextFieldIcon />
              <ImportIcon />
            </RuleIcons>
          </RuleBar>
          <Panes>
            <TreePane $w={433}>
              <TreeRow $indent={2}><BpelIcon /><Label $m={8}>JavaEmbedBpel.bpel</Label></TreeRow>
              {leftNodes.map(n => (
                <TreeRow key={n.name + n.lvl} $indent={3 + n.lvl * 20}>
                  <Exp open={n.open} up={n.up} down={n.down} />
                  <Connector />
                  <IconSlot>{n.icon}</IconSlot>
                  <Label>{n.name}{n.type && <TypeText>{n.type}</TypeText>}</Label>
                </TreeRow>
              ))}
            </TreePane>
            <Splitter><TriLeft /></Splitter>
            <DragPane>Drag objects here</DragPane>
            <Splitter><TriRight /><TriRight /></Splitter>
            <TreePane $w={451}>
              <TreeRow $mirror $indent={2}><BpelIcon /><Label $mirror $m={6}>JavaEmbedBpel.bpel</Label></TreeRow>
              {rightNodes.map(n => (
                <TreeRow key={n.name + n.lvl} $mirror $indent={4 + n.lvl * 20}>
                  <Exp open={n.open} up={n.up} down={n.down} />
                  <Connector />
                  <IconSlot>{n.icon}</IconSlot>
                  <Label $mirror>{n.name}{n.type && <TypeText>{n.type}</TypeText>}</Label>
                </TreeRow>
              ))}
              <TreeRow $mirror $indent={127}>
                <Elbow />
                <IconSlot><ElementIcon /></IconSlot>
                <HiLabel>client:result string</HiLabel>
              </TreeRow>
            </TreePane>
            <MapLink />
            <MapNode><CalcIcon /></MapNode>
          </Panes>
          <RowsHandle><RowsHandleGrip><TriDown /><TriUp /></RowsHandleGrip></RowsHandle>
          <TableTools>
            <PlusIcon /><RedX /><GrayArrow /><GrayArrow down />
          </TableTools>
          <RuleTable>
            <HeadRow>
              <HeadCell $w={20} />
              <HeadCell $w={563}>From</HeadCell>
              <HeadCell>To</HeadCell>
            </HeadRow>
            <DataRow>
              <MarkerCell><DocsIcon /></MarkerCell>
              <DataCell $w={563}><CalcIcon s={15} /> 1</DataCell>
              <DataCell><CalcIcon s={15} /> $outputVariable.payload/client:result</DataCell>
            </DataRow>
          </RuleTable>
        </TabPanel>
        <DialogFooter>
          <DlgButton $w={54}><u>H</u>elp</DlgButton>
          <FooterGroup>
            <DlgButton $w={66}><u>A</u>pply</DlgButton>
            <DlgButton $w={66} $primary>OK</DlgButton>
            <DlgButton $w={66}>Cancel</DlgButton>
          </FooterGroup>
        </DialogFooter>
      </DialogBody>
      <Grip><GripIcon /></Grip>
    </Dialog>
  </Page>
);

export default App;
